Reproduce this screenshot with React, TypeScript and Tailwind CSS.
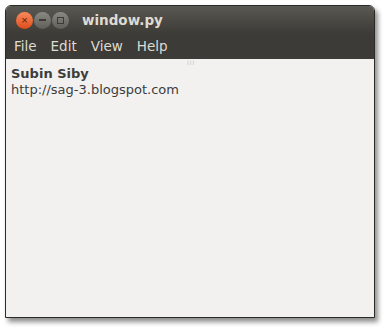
export default function App() {
  return (
    <div className="h-[327px] w-[383px] bg-white pl-[5px] pt-[5px]" style={{ fontFamily: '"DejaVu Sans", sans-serif' }}>
      <div className="flex h-[313px] w-[370px] flex-col overflow-hidden rounded-t-[6px] border border-[#2a2a28] bg-[#f2f1f0] shadow-[3px_4px_5px_rgba(0,0,0,0.45)]">
        <div className="flex h-[28px] items-center bg-gradient-to-b from-[#5a5852] to-[#3c3b37] pl-[10px]">
          <div className="flex items-center gap-[1px]">
            <span className="flex h-[17px] w-[17px] items-center justify-center rounded-full bg-gradient-to-b from-[#f78a5a] to-[#df4a16] text-[9px] leading-none text-[#5a1a05]">×</span>
            <span className="flex h-[17px] w-[17px] items-center justify-center rounded-full bg-gradient-to-b from-[#8a8983] to-[#5f5e59]">
              <span className="h-[2px] w-[7px] bg-[#3c3b37]" />
            </span>
            <span className="flex h-[17px] w-[17px] items-center justify-center rounded-full bg-gradient-to-b from-[#8a8983] to-[#5f5e59]">
              <span className="h-[7px] w-[7px] border border-[#3c3b37]" />
            </span>
          </div>
          <span className="ml-[13px] text-[13.5px] font-bold text-[#dfdbd2]">window.py</span>
        </div>
        <div className="flex h-[25px] items-center gap-[14px] bg-[#3c3b37] pl-[8px] text-[13.5px] text-[#dfdbd2]">
          <span>File</span>
          <span>Edit</span>
          <span>View</span>
          <span>Help</span>
        </div>
        <div className="relative flex-1 px-[5px] pt-[7px] text-[13px] leading-[16px] text-[#3c3c3c]">
          <span className="absolute left-[181px] top-[1px] text-[6px] leading-none tracking-[1px] text-[#c8c6c2]">III</span>
          <div className="font-bold">Subin Siby</div>
          <div>http://sag-3.blogspot.com</div>
        </div>
      </div>
    </div>
  );
}
